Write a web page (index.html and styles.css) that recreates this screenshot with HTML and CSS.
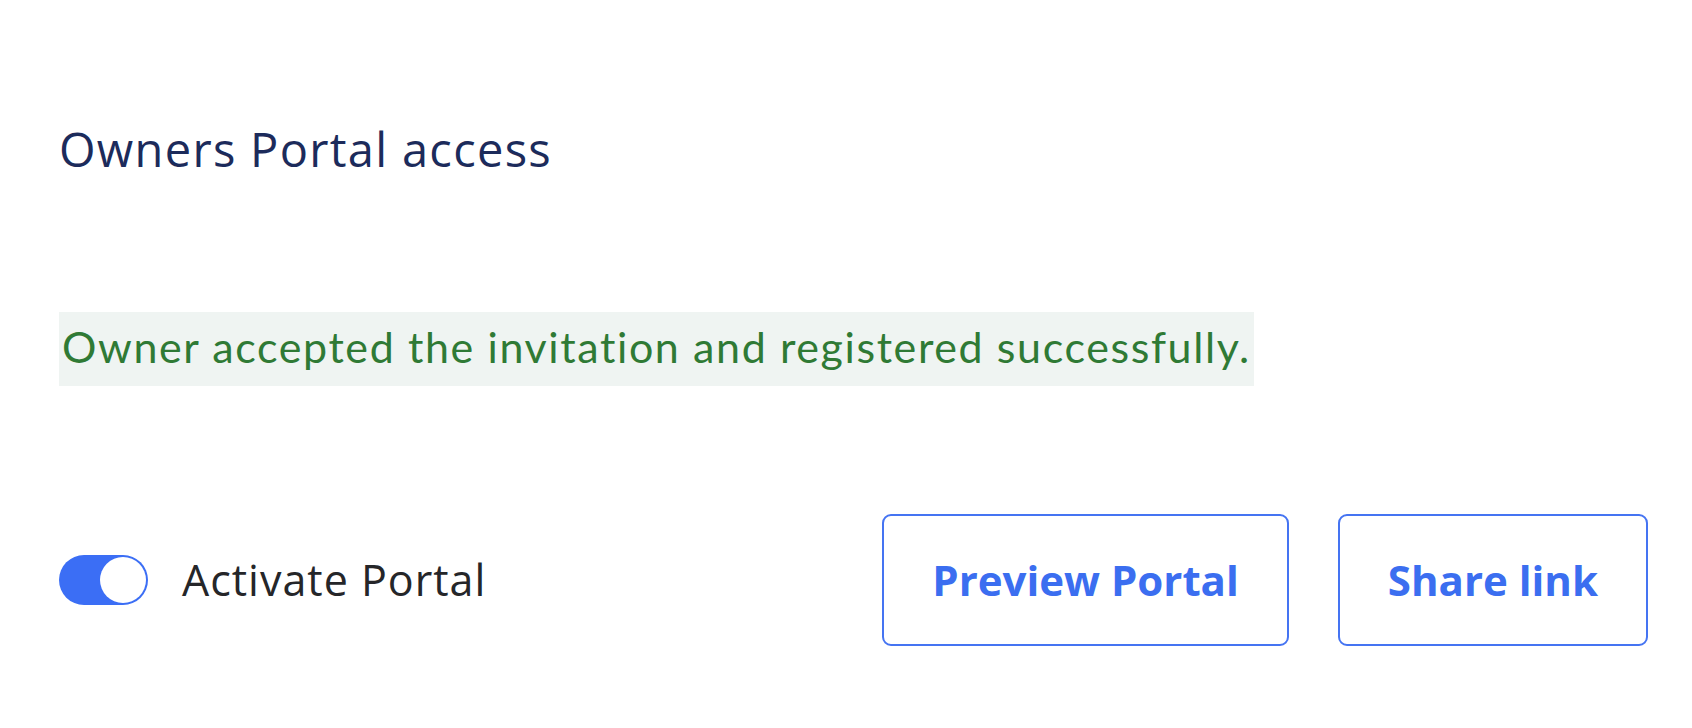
FILE: index.html
```html
<!DOCTYPE html>
<html lang="en">
<head>
<meta charset="utf-8">
<title>Owners Portal access</title>
<link rel="stylesheet" href="styles.css">
</head>
<body>
<section class="card">
  <h2 class="title">Owners Portal access</h2>
  <div class="status-wrap">
    <p class="status">Owner accepted the invitation and registered successfully.</p>
  </div>
  <div class="actions">
    <label class="switch-row">
      <span class="switch"><span class="knob"></span></span>
      <span class="switch-label">Activate Portal</span>
    </label>
    <div class="buttons">
      <button class="btn" type="button">Preview Portal</button>
      <button class="btn" type="button">Share link</button>
    </div>
  </div>
</section>
</body>
</html>
```

FILE: styles.css
```css
* { box-sizing: border-box; }

html, body {
  margin: 0;
  padding: 0;
  background: #ffffff;
}

body {
  font-family: "Open Sans", "Noto Sans", sans-serif;
  width: 1692px;
  height: 728px;
  overflow: hidden;
}

.card {
  padding: 0 44px 0 59px;
}

.title {
  margin: 119px 0 0 0;
  font-size: 47px;
  line-height: 60px;
  letter-spacing: 1.3px;
  font-weight: 400;
  color: #1c2b5b;
}

.status-wrap {
  margin-top: 133px;
}

.status {
  display: inline-block;
  margin: 0;
  padding: 0 3px 4px 3px;
  font-family: "Lato", "Noto Sans", sans-serif;
  font-size: 43px;
  line-height: 70px;
  letter-spacing: 1.6px;
  color: #2f7a35;
  background: #eff4f2;
}

.actions {
  margin-top: 128px;
  display: flex;
  align-items: center;
  justify-content: space-between;
}

.switch-row {
  display: flex;
  align-items: center;
  gap: 34px;
}

.switch {
  width: 89px;
  height: 50px;
  padding: 2px;
  border-radius: 25px;
  background: #3b6ef5;
  display: flex;
  justify-content: flex-end;
  align-items: center;
}

.knob {
  width: 46px;
  height: 46px;
  border-radius: 50%;
  background: #ffffff;
}

.switch-label {
  font-size: 43px;
  line-height: 50px;
  letter-spacing: 1px;
  color: #252629;
}

.buttons {
  display: flex;
  gap: 49px;
}

.btn {
  font-family: "Open Sans", "Noto Sans", sans-serif;
  font-size: 42px;
  font-weight: 700;
  line-height: 50px;
  color: #3b6ef0;
  background: #ffffff;
  border: 2px solid #4574f2;
  border-radius: 9px;
  padding: 39px 48px;
  cursor: pointer;
}
```
